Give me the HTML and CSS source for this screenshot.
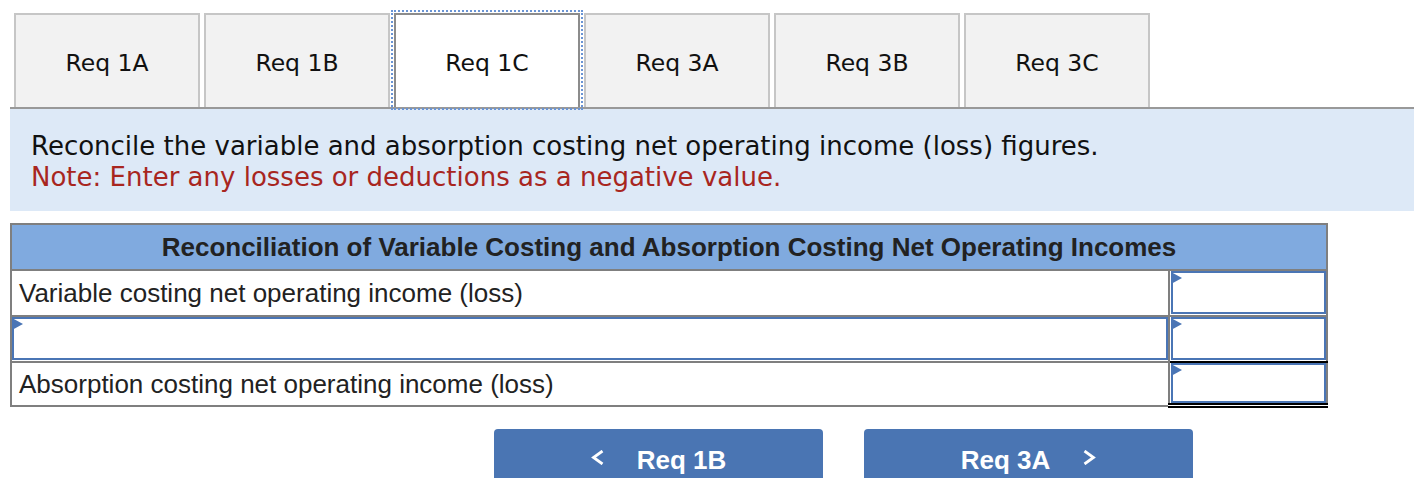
FILE: index.html
```html
<!DOCTYPE html>
<html lang="en">
<head>
<meta charset="utf-8">
<title>Req 1C</title>
<link rel="stylesheet" href="styles.css">
</head>
<body>
<div class="tabs">
  <div class="tab">Req 1A</div>
  <div class="tab">Req 1B</div>
  <div class="tab active">Req 1C</div>
  <div class="tab">Req 3A</div>
  <div class="tab">Req 3B</div>
  <div class="tab">Req 3C</div>
</div>
<div class="prompt">
  <p class="line">Reconcile the variable and absorption costing net operating income (loss) figures.</p>
  <p class="line note">Note: Enter any losses or deductions as a negative value.</p>
</div>
<table class="recon">
  <tr class="head-row">
    <th colspan="2">Reconciliation of Variable Costing and Absorption Costing Net Operating Incomes</th>
  </tr>
  <tr>
    <td class="label">Variable costing net operating income (loss)</td>
    <td class="amount"><div class="field"><input class="box" type="text"></div></td>
  </tr>
  <tr>
    <td class="label input-cell"><div class="field"><input class="box" type="text"></div></td>
    <td class="amount single"><div class="field"><input class="box" type="text"></div></td>
  </tr>
  <tr>
    <td class="label">Absorption costing net operating income (loss)</td>
    <td class="amount double"><div class="field"><input class="box" type="text"></div></td>
  </tr>
</table>
<div class="nav">
  <div class="navbtn">
    <svg class="chev" width="13" height="15" viewBox="0 0 13 15"><polyline points="11.5,1 2.5,7.5 11.5,14" fill="none" stroke="#fff" stroke-width="2.8"/></svg>
    <span>Req 1B</span>
  </div>
  <div class="navbtn">
    <span>Req 3A</span>
    <svg class="chev" width="13" height="15" viewBox="0 0 13 15"><polyline points="1.5,1 10.5,7.5 1.5,14" fill="none" stroke="#fff" stroke-width="2.8"/></svg>
  </div>
</div>
</body>
</html>
```
FILE: styles.css
```css
html, body {
  margin: 0;
  padding: 0;
  overflow: hidden;
  background: #fff;
}

body {
  font-family: "Liberation Sans", Arial, sans-serif;
  color: #222;
}

.tabs {
  display: flex;
  gap: 4px;
  margin-left: 10px;
  padding: 13px 0 0 4px;
  border-bottom: 2px solid #999;
}

.tab {
  box-sizing: border-box;
  width: 186px;
  height: 94px;
  border: 2px solid #c6c6c6;
  border-bottom: 0;
  background: #f2f2f2;
  display: flex;
  align-items: center;
  justify-content: center;
  padding-top: 3px;
  font-family: "DejaVu Sans", Verdana, sans-serif;
  font-size: 23.5px;
  color: #111;
}

.tab.active {
  background: #fff;
  border-color: #8c8c8c;
  outline: 2px dotted #6a94d4;
  outline-offset: 1px;
  position: relative;
  z-index: 1;
}

.prompt {
  margin-left: 10px;
  background: #dde9f7;
  padding: 22px 21px 18px;
  font-family: "DejaVu Sans", Verdana, sans-serif;
  font-size: 26px;
  line-height: 31px;
  color: #111;
}

.line {
  margin: 0;
}

.note {
  color: #a8261f;
}

.recon {
  margin: 12px 0 0 10px;
  width: 1318px;
  border-collapse: collapse;
  border: 2px solid #7f7f7f;
  font-size: 26px;
}

.recon th {
  background: #80aadf;
  border: 2px solid #7f7f7f;
  padding: 0;
  font-size: 26px;
  line-height: 44px;
  font-weight: bold;
  color: #222;
  text-align: center;
  vertical-align: middle;
}

.recon td {
  border: 2px solid #7f7f7f;
  padding: 0;
  line-height: 30px;
  vertical-align: middle;
}

.recon td.label {
  padding-left: 7px;
  color: #222;
}

.recon td.input-cell {
  padding: 0 0 1px 0;
}

.recon td.amount {
  width: 155px;
  padding: 0 0 1px 1px;
}

.recon td.single {
  border-bottom: 2px solid #000;
}

.recon td.double {
  border-bottom: 5px double #000;
  padding-bottom: 0;
}

.recon td.double .box {
  height: 40px;
}

.field {
  position: relative;
}

.field::before {
  content: "";
  position: absolute;
  left: 0;
  top: 1px;
  border-left: 11px solid #4a75b5;
  border-top: 6px solid transparent;
  border-bottom: 6px solid transparent;
}

.box {
  display: block;
  box-sizing: border-box;
  width: 100%;
  height: 43px;
  margin: 0;
  border: 2px solid #4a75b5;
  background: #fff;
  outline: none;
  font: inherit;
}

.nav {
  display: flex;
  gap: 41px;
  margin-top: 21px;
  padding-left: 494px;
}

.navbtn {
  box-sizing: border-box;
  width: 329px;
  height: 60px;
  background: #4a75b3;
  border-radius: 4px 4px 0 0;
  color: #fff;
  display: flex;
  align-items: flex-start;
  justify-content: center;
  gap: 33px;
  padding-top: 16px;
  font-size: 26px;
  font-weight: bold;
  line-height: 30px;
}

.chev {
  margin-top: 5px;
  flex: none;
}
```
